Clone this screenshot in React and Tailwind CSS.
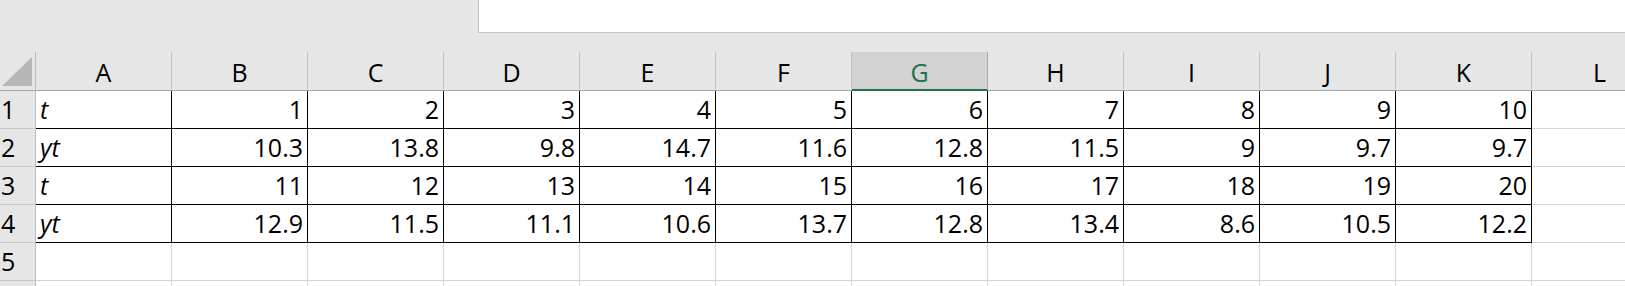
const cols = ['A', 'B', 'C', 'D', 'E', 'F', 'G', 'H', 'I', 'J', 'K', 'L'];

const rows = [
  ['t', 1, 2, 3, 4, 5, 6, 7, 8, 9, 10],
  ['yt', 10.3, 13.8, 9.8, 14.7, 11.6, 12.8, 11.5, 9, 9.7, 9.7],
  ['t', 11, 12, 13, 14, 15, 16, 17, 18, 19, 20],
  ['yt', 12.9, 11.5, 11.1, 10.6, 13.7, 12.8, 13.4, 8.6, 10.5, 12.2],
];

function ColHeader({ label }) {
  const selected = label === 'G';
  return (
    <div
      className={
        selected
          ? 'h-[39px] bg-[#d2d2d2] border-r border-r-[#ababab] border-b-2 border-b-[#217346] text-center text-[#217346] pt-[2px] leading-[37px]'
          : 'h-[39px] bg-[#e6e6e6] border-r border-r-[#c3c3c3] border-b border-b-[#a6a6a6] text-center pt-[2px] leading-[37px]'
      }
    >
      {label}
    </div>
  );
}

function RowHeader({ n }) {
  return (
    <div className="h-[38px] bg-[#e6e6e6] border-r border-r-[#bcbcbc] border-b border-b-[#cacaca] pl-px leading-[37px]">
      {n}
    </div>
  );
}

function DataCell({ value, first }) {
  return (
    <div
      className={
        first
          ? 'h-[38px] border-r border-b border-black pl-[4px] italic leading-[37px] whitespace-nowrap'
          : 'h-[38px] border-r border-b border-black pr-[4px] text-right leading-[37px] whitespace-nowrap'
      }
    >
      {value}
    </div>
  );
}

function EmptyCell() {
  return <div className="h-[38px] border-r border-b border-[#d4d4d4]" />;
}

export default function App() {
  return (
    <div
      className="w-[1625px] h-[286px] overflow-hidden bg-white text-[25px] text-black"
      style={{ fontFamily: '"Open Sans", "Liberation Sans", sans-serif' }}
    >
      <div className="h-[52px] bg-[#e6e6e6]">
        <div className="ml-[478px] h-[33px] bg-[#fdfdfd] border-l border-b border-[#c6c6c6]" />
      </div>

      <div className="grid grid-cols-[36px_repeat(12,136px)]">
        <div className="h-[39px] bg-[#e6e6e6] border-r border-r-[#bcbcbc] border-b border-b-[#a6a6a6] relative">
          <svg width="35" height="38" className="absolute left-0 top-0">
            <polygon points="2,34 32,34 32,5" fill="#b6b6b6" />
          </svg>
        </div>
        {cols.map((c) => (
          <ColHeader key={c} label={c} />
        ))}

        {rows.map((r, i) => (
          <div key={i} className="contents">
            <RowHeader n={i + 1} />
            {r.map((v, j) => (
              <DataCell key={j} value={v} first={j === 0} />
            ))}
            <EmptyCell />
          </div>
        ))}

        {/* row 5, then a sliver of row 6 whose number falls below the window */}
        {[5, ''].map((n, k) => (
          <div key={k} className="contents">
            <RowHeader n={n} />
            {cols.map((c) => (
              <EmptyCell key={c} />
            ))}
          </div>
        ))}
      </div>
    </div>
  );
}
